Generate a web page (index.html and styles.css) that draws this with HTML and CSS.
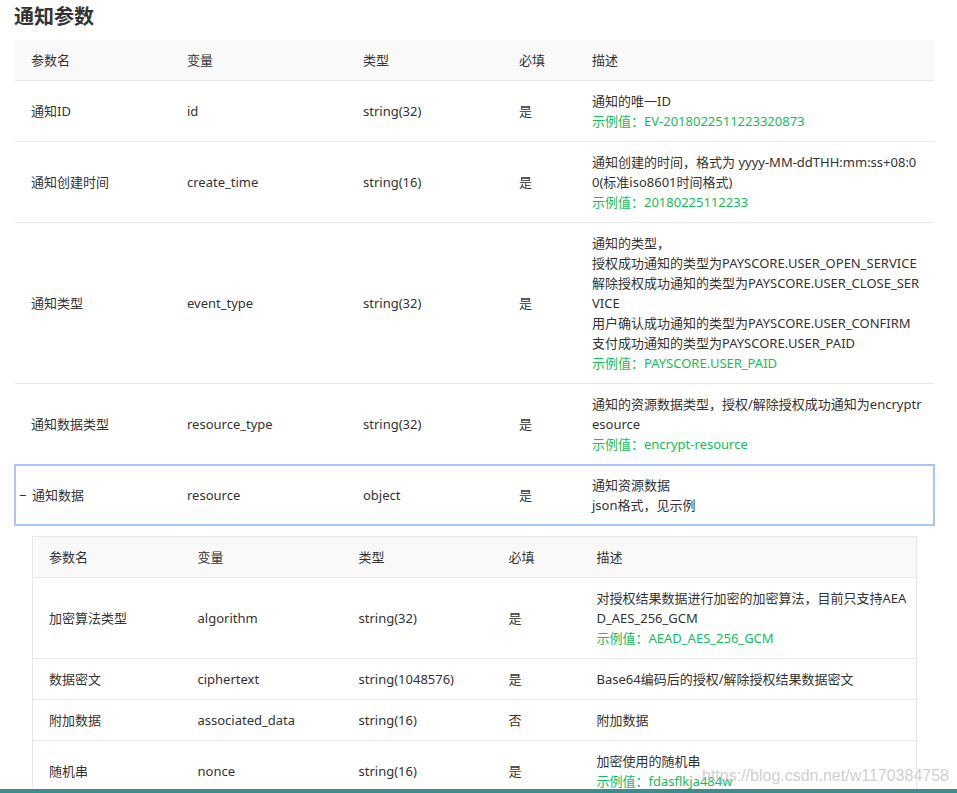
FILE: index.html
```html
<!DOCTYPE html>
<html lang="zh-CN">
<head>
<meta charset="utf-8">
<title>通知参数</title>
<link rel="stylesheet" href="styles.css">
</head>
<body>
<div class="page">
  <h2 class="title">通知参数</h2>
  <table class="params outer">
    <colgroup>
      <col style="width:156px"><col style="width:176px"><col style="width:156px"><col style="width:73px"><col style="width:358px">
    </colgroup>
    <thead>
      <tr><th>参数名</th><th>变量</th><th>类型</th><th>必填</th><th>描述</th></tr>
    </thead>
    <tbody>
      <tr>
        <td>通知ID</td><td>id</td><td>string(32)</td><td>是</td>
        <td class="desc">通知的唯一ID<br><span class="ex">示例值：EV-2018022511223320873</span></td>
      </tr>
      <tr>
        <td>通知创建时间</td><td>create_time</td><td>string(16)</td><td>是</td>
        <td class="desc">通知创建的时间，格式为 yyyy-MM-ddTHH:mm:ss+08:00(标准iso8601时间格式)<br><span class="ex">示例值：20180225112233</span></td>
      </tr>
      <tr>
        <td>通知类型</td><td>event_type</td><td>string(32)</td><td>是</td>
        <td class="desc">通知的类型，<br>授权成功通知的类型为PAYSCORE.USER_OPEN_SERVICE<br>解除授权成功通知的类型为PAYSCORE.USER_CLOSE_SERVICE<br>用户确认成功通知的类型为PAYSCORE.USER_CONFIRM<br>支付成功通知的类型为PAYSCORE.USER_PAID<br><span class="ex">示例值：PAYSCORE.USER_PAID</span></td>
      </tr>
      <tr>
        <td>通知数据类型</td><td>resource_type</td><td>string(32)</td><td>是</td>
        <td class="desc tight">通知的资源数据类型，授权/解除授权成功通知为encryptresource<br><span class="ex">示例值：encrypt-resource</span></td>
      </tr>
      <tr class="active">
        <td><span class="toggle">−</span>通知数据</td><td>resource</td><td>object</td><td>是</td>
        <td class="desc">通知资源数据<br>json格式，见示例</td>
      </tr>
      <tr class="nested-row">
        <td colspan="5" class="nested-cell">
          <table class="params inner">
            <colgroup>
              <col style="width:149px"><col style="width:161px"><col style="width:150px"><col style="width:88px"><col style="width:336px">
            </colgroup>
            <thead>
              <tr><th>参数名</th><th>变量</th><th>类型</th><th>必填</th><th>描述</th></tr>
            </thead>
            <tbody>
              <tr>
                <td>加密算法类型</td><td>algorithm</td><td>string(32)</td><td>是</td>
                <td class="desc">对授权结果数据进行加密的加密算法，目前只支持AEAD_AES_256_GCM<br><span class="ex">示例值：AEAD_AES_256_GCM</span></td>
              </tr>
              <tr>
                <td>数据密文</td><td>ciphertext</td><td>string(1048576)</td><td>是</td>
                <td class="desc">Base64编码后的授权/解除授权结果数据密文</td>
              </tr>
              <tr>
                <td>附加数据</td><td>associated_data</td><td>string(16)</td><td>否</td>
                <td class="desc">附加数据</td>
              </tr>
              <tr>
                <td>随机串</td><td>nonce</td><td>string(16)</td><td>是</td>
                <td class="desc">加密使用的随机串<br><span class="ex">示例值：fdasflkja484w</span></td>
              </tr>
            </tbody>
          </table>
        </td>
      </tr>
    </tbody>
  </table>
</div>
<div class="watermark">https://blog.csdn.net/w1170384758</div>
<div class="bottom-bar"></div>
</body>
</html>
```

FILE: styles.css
```css
html, body {
  margin: 0;
  padding: 0;
  background: #ffffff;
}
body {
  font-family: "Noto Sans", "Noto Sans CJK SC", sans-serif;
  font-size: 13px;
  line-height: 20px;
  color: #333333;
  overflow: hidden;
  height: 793px;
}
.page {
  padding: 4px 0 0 14px;
}
.title {
  margin: 0 0 12px 0;
  font-size: 20px;
  line-height: 24px;
  font-weight: bold;
  color: #333333;
  font-family: "Noto Sans CJK SC", sans-serif;
}
.params {
  border-collapse: collapse;
  table-layout: fixed;
}
.outer {
  width: 919px;
}
.inner {
  width: 884px;
  border: 1px solid #e8e8e8;
}
.params th {
  background: #f9f9f9;
  font-weight: normal;
  text-align: left;
  padding: 10px 16px;
  border-bottom: 1px solid #e8e8e8;
}
.params td {
  padding: 10px 16px;
  text-align: left;
  vertical-align: middle;
  border-bottom: 1px solid #e8e8e8;
  word-break: break-all;
}
.outer > tbody > tr > td.desc {
  padding-right: 13px;
}
.outer > tbody > tr > td.desc.tight {
  padding-right: 10px;
}
.inner td.desc {
  padding-right: 8px;
}
.ex {
  color: #11c05a;
}
.active td {
  padding-top: 9px;
  padding-bottom: 9px;
  border-top: 2px solid #a6c5fa;
  border-bottom: 2px solid #a6c5fa;
}
.active td:first-child {
  border-left: 2px solid #a6c5fa;
}
.active td:last-child {
  border-right: 2px solid #a6c5fa;
}
.toggle {
  display: inline-block;
  width: 13px;
  margin-left: -13px;
  text-align: left;
}
.params td.nested-cell {
  padding: 10px 18px 0 17px;
  border-bottom: none;
}
.watermark {
  position: absolute;
  left: 702px;
  top: 766px;
  font-family: "Liberation Sans", Arial, sans-serif;
  font-size: 16px;
  line-height: 20px;
  color: rgba(190, 190, 190, 0.75);
  white-space: nowrap;
}
.bottom-bar {
  position: absolute;
  left: 0;
  right: 0;
  top: 789px;
  height: 4px;
  background: #3d8c92;
}
```
